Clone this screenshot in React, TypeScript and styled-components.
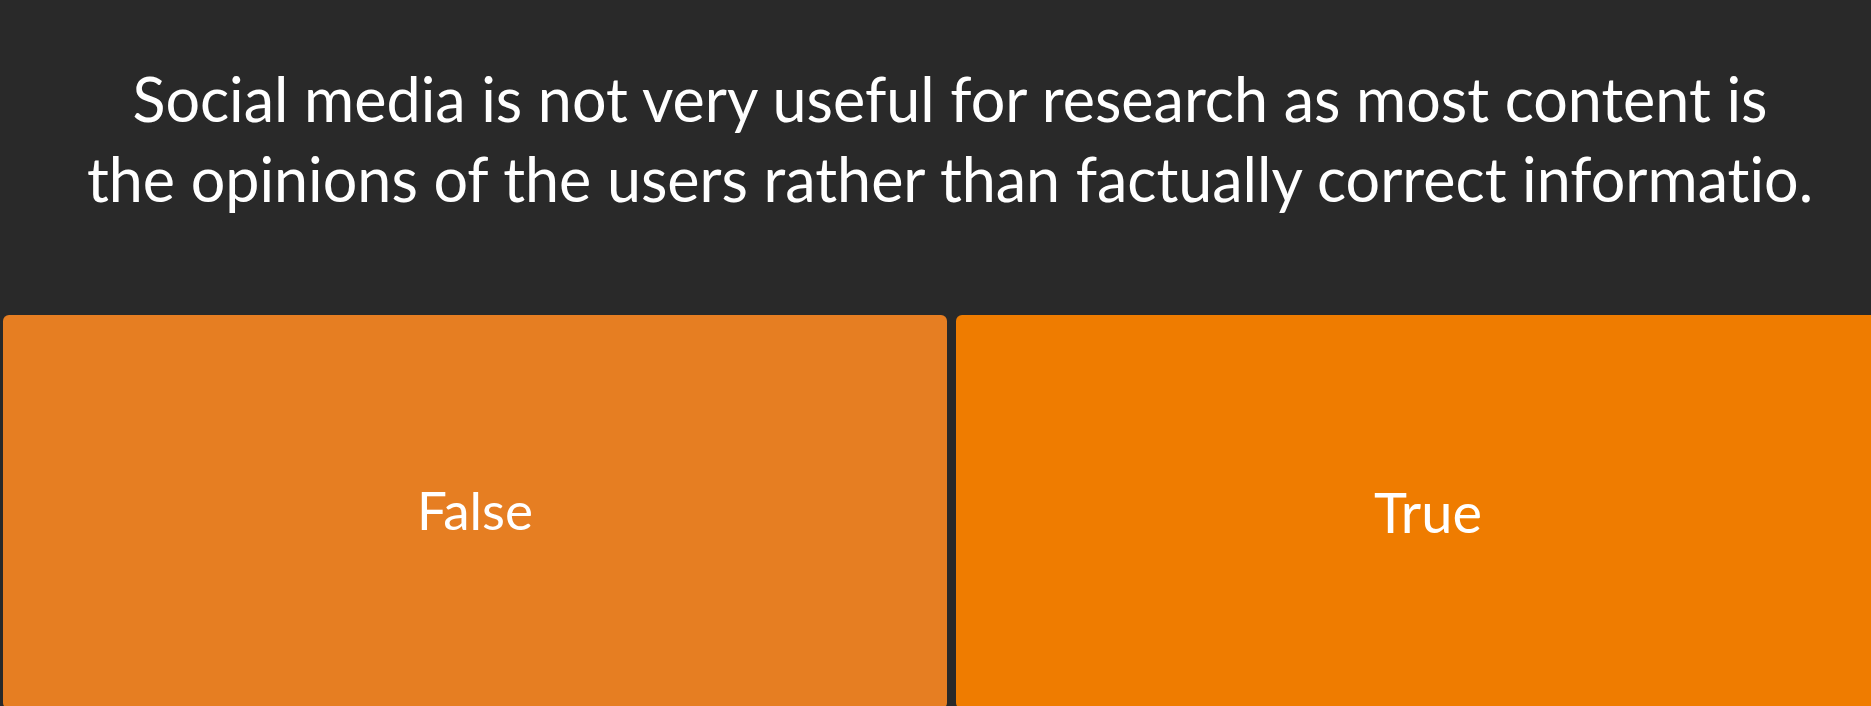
import styled, { createGlobalStyle } from "styled-components";

const GlobalStyle = createGlobalStyle`
  html, body {
    margin: 0;
    padding: 0;
    background: #292929;
    overflow: hidden;
  }
  body {
    font-family: Lato, "Open Sans", sans-serif;
    font-variant-ligatures: none;
  }
`;

const Page = styled.div`
  width: 1900px;
  background: #292929;
`;

const Question = styled.h1`
  margin: 0;
  padding: 59px 40px 0;
  height: 315px;
  box-sizing: border-box;
  color: #ffffff;
  font-size: 61px;
  font-weight: 400;
  line-height: 80px;
  text-align: center;
`;

const Answers = styled.div`
  display: grid;
  grid-template-columns: 944px 944px;
  gap: 9px;
  padding-left: 3px;
`;

const Answer = styled.button<{ $color: string; $size: number }>`
  height: 394px;
  border: none;
  border-radius: 6px;
  background: ${(p) => p.$color};
  color: #ffffff;
  font-family: inherit;
  font-size: ${(p) => p.$size}px;
  cursor: pointer;
  display: flex;
  align-items: center;
  justify-content: center;
  padding: 0 0 ${(p) => (p.$size > 54 ? 2 : 6)}px;
`;

const answers = [
  { label: "False", color: "#e67e22", size: 53 },
  { label: "True", color: "#ef7c00", size: 56 },
];

export default function App() {
  return (
    <Page>
      <GlobalStyle />
      <Question>
        Social media is not very useful for research as most content is
        <br />
        the opinions of the users rather than factually correct informatio.
      </Question>
      <Answers>
        {answers.map((a) => (
          <Answer key={a.label} $color={a.color} $size={a.size}>
            {a.label}
          </Answer>
        ))}
      </Answers>
    </Page>
  );
}
